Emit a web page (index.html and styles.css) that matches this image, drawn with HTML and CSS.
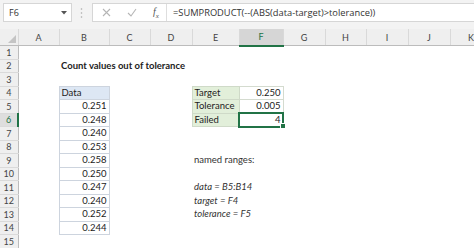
FILE: index.html
```html
<!DOCTYPE html>
<html lang="en">
<head>
    <meta charset="UTF-8">
    <meta name="viewport" content="width=device-width, initial-scale=1.0">
    <title>Count values out of tolerance</title>
    <link rel="stylesheet" href="styles.css">
</head>
<body>
    <div class="formula-bar">
        <div class="name-box">
            <span>F6</span>
            <svg class="drop" width="6" height="4" viewBox="0 0 6 4"><path d="M0 0h6L3 3.5z" fill="#555"/></svg>
        </div>
        <svg class="grip" width="3" height="12" viewBox="0 0 3 12">
            <circle cx="1.5" cy="2" r="0.8" fill="#aaa"/>
            <circle cx="1.5" cy="6" r="0.8" fill="#aaa"/>
            <circle cx="1.5" cy="10" r="0.8" fill="#aaa"/>
        </svg>
        <div class="formula-box">
            <div class="bar-icons">
                <svg width="9" height="9" viewBox="0 0 9 9"><path d="M1 1l7 7M8 1l-7 7" stroke="#b5b5b5" stroke-width="1.1"/></svg>
                <svg width="10" height="9" viewBox="0 0 10 9"><path d="M1 5l3 3 5-7" stroke="#b5b5b5" stroke-width="1.1" fill="none"/></svg>
                <span class="fx">f<sub>x</sub></span>
            </div>
            <div class="formula">=SUMPRODUCT(--(ABS(data-target)&gt;tolerance))</div>
        </div>
    </div>

    <table class="sheet">
        <colgroup>
            <col style="width:18px"><col style="width:41px"><col style="width:50px"><col style="width:41px">
            <col style="width:42px"><col style="width:47px"><col style="width:44px"><col style="width:42px">
            <col style="width:41px"><col style="width:42px"><col style="width:42px"><col style="width:42px">
        </colgroup>
        <tr class="col-heads">
            <th class="corner"><svg width="8" height="8" viewBox="0 0 8 8"><path d="M8 0v8H0z" fill="#c4c4c4"/></svg></th>
            <th>A</th><th>B</th><th>C</th><th>D</th><th>E</th><th class="active">F</th><th>G</th><th>H</th><th>I</th><th>J</th><th>K</th>
        </tr>
        <tr><th class="rh">1</th><td></td><td></td><td></td><td></td><td></td><td></td><td></td><td></td><td></td><td></td><td></td></tr>
        <tr><th class="rh">2</th><td></td><td class="title">Count values out of tolerance</td><td></td><td></td><td></td><td></td><td></td><td></td><td></td><td></td><td></td></tr>
        <tr><th class="rh">3</th><td></td><td></td><td></td><td></td><td></td><td></td><td></td><td></td><td></td><td></td><td></td></tr>
        <tr><th class="rh">4</th><td></td><td class="data data-head">Data</td><td></td><td></td><td class="lbl">Target</td><td class="val num">0.250</td><td></td><td></td><td></td><td></td><td></td></tr>
        <tr><th class="rh">5</th><td></td><td class="data num">0.251</td><td></td><td></td><td class="lbl">Tolerance</td><td class="val num">0.005</td><td></td><td></td><td></td><td></td><td></td></tr>
        <tr><th class="rh active">6</th><td></td><td class="data num">0.248</td><td></td><td></td><td class="lbl">Failed</td><td class="val num selected">4</td><td></td><td></td><td></td><td></td><td></td></tr>
        <tr><th class="rh">7</th><td></td><td class="data num">0.240</td><td></td><td></td><td></td><td></td><td></td><td></td><td></td><td></td><td></td></tr>
        <tr><th class="rh">8</th><td></td><td class="data num">0.253</td><td></td><td></td><td></td><td></td><td></td><td></td><td></td><td></td><td></td></tr>
        <tr><th class="rh">9</th><td></td><td class="data num">0.258</td><td></td><td></td><td class="note">named ranges:</td><td></td><td></td><td></td><td></td><td></td><td></td></tr>
        <tr><th class="rh">10</th><td></td><td class="data num">0.250</td><td></td><td></td><td></td><td></td><td></td><td></td><td></td><td></td><td></td></tr>
        <tr><th class="rh">11</th><td></td><td class="data num">0.247</td><td></td><td></td><td class="note italic">data = B5:B14</td><td></td><td></td><td></td><td></td><td></td><td></td></tr>
        <tr><th class="rh">12</th><td></td><td class="data num">0.240</td><td></td><td></td><td class="note italic">target = F4</td><td></td><td></td><td></td><td></td><td></td><td></td></tr>
        <tr><th class="rh">13</th><td></td><td class="data num">0.252</td><td></td><td></td><td class="note italic">tolerance = F5</td><td></td><td></td><td></td><td></td><td></td><td></td></tr>
        <tr><th class="rh">14</th><td></td><td class="data num">0.244</td><td></td><td></td><td></td><td></td><td></td><td></td><td></td><td></td><td></td></tr>
        <tr><th class="rh">15</th><td></td><td></td><td></td><td></td><td></td><td></td><td></td><td></td><td></td><td></td><td></td></tr>
        <tr><th class="rh"></th><td></td><td></td><td></td><td></td><td></td><td></td><td></td><td></td><td></td><td></td><td></td></tr>
    </table>
</body>
</html>
```

FILE: styles.css
```css
body {
    margin: 0;
    padding: 0;
    background-color: #fff;
    overflow: hidden;
    font-family: Lato, "Open Sans", sans-serif;
    color: #222;
}

/* formula bar at the top */
.formula-bar {
    height: 29px;
    background-color: #f3f3f3;
    display: flex;
    align-items: flex-start;
    padding-top: 3px;
    box-sizing: border-box;
}

.name-box {
    margin-left: 3px;
    width: 69px;
    height: 19px;
    box-sizing: border-box;
    background-color: #fff;
    border: 1px solid #d6d6d6;
    display: flex;
    align-items: center;
    justify-content: space-between;
    padding: 0 4px 0 5px;
    font-family: "Open Sans", sans-serif;
    font-size: 9px;
    color: #333;
}

.grip {
    margin: 4px 9px 0 8px;
}

.formula-box {
    flex: 1;
    height: 19px;
    box-sizing: border-box;
    background-color: #fff;
    border: 1px solid #d6d6d6;
    border-right: none;
    display: flex;
    align-items: center;
}

.bar-icons {
    width: 74px;
    height: 100%;
    display: flex;
    align-items: center;
    gap: 16px;
    padding-left: 9px;
    box-sizing: border-box;
    border-right: 1px solid #dedede;
}

.fx {
    font-family: "Liberation Serif", serif;
    font-style: italic;
    font-size: 10px;
    color: #555;
}

.fx sub {
    font-size: 7px;
}

.formula {
    padding-left: 6px;
    font-family: "Open Sans", sans-serif;
    font-size: 9.3px;
    color: #333;
    white-space: nowrap;
}

/* the grid */
.sheet {
    border-collapse: collapse;
    table-layout: fixed;
    width: 492px;
    font-size: 9.5px;
}

.sheet tr {
    height: 13.5px;
}

.sheet td {
    padding: 0 2px;
    line-height: 12px;
    white-space: nowrap;
    overflow: visible;
}

.col-heads th {
    height: 14px;
    background-color: #efefef;
    border-right: 1px solid #d9d9d9;
    border-bottom: 1px solid #bcbcbc;
    font-weight: normal;
    font-size: 9px;
    color: #444;
    padding: 0;
}

.col-heads .corner {
    text-align: right;
    vertical-align: bottom;
    padding: 0 2px 2px 0;
    line-height: 0;
}

.col-heads th.active {
    background-color: #d6d6d6;
    border-bottom: 2px solid #217346;
    color: #217346;
}

.rh {
    background-color: #efefef;
    border-right: 1px solid #bcbcbc;
    border-bottom: 1px solid #dadada;
    font-weight: normal;
    font-size: 9px;
    color: #444;
    padding: 0;
}

.rh.active {
    background-color: #dedede;
    border-right: 2px solid #217346;
    color: #217346;
}

.title {
    font-weight: bold;
}

.num {
    text-align: right;
}

.data {
    border: 1px solid #cdd4de;
}

.data-head {
    background-color: #dde7f4;
}

.lbl {
    background-color: #e2efda;
    border: 1px solid #cfdac8;
}

.val {
    border: 1px solid #d4dbcf;
}

.selected {
    position: relative;
    outline: 2px solid #217346;
    outline-offset: -1px;
}

/* fill handle */
.selected::after {
    content: "";
    position: absolute;
    right: -3px;
    bottom: -3px;
    width: 4px;
    height: 4px;
    background-color: #217346;
    border: 1px solid #fff;
}

.note {
    color: #333;
}

.italic {
    font-style: italic;
}
```
